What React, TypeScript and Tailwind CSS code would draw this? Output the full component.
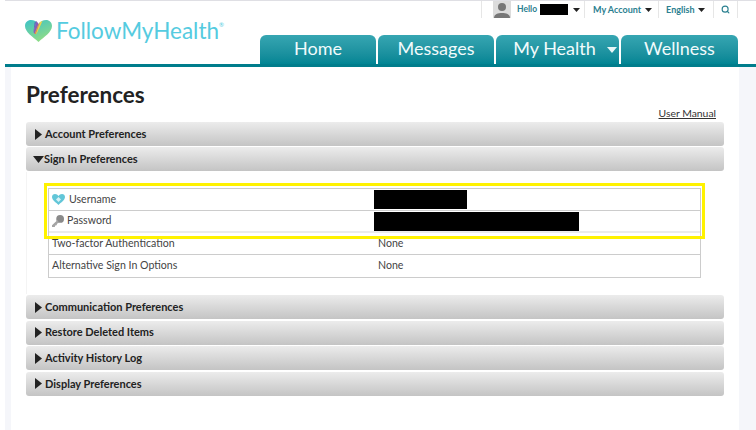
import type { ReactNode } from "react";
import { Search } from "lucide-react";

const font = "font-['Lato','Open_Sans',sans-serif]";

function Caret({ className = "" }: { className?: string }) {
  return (
    <svg width="7" height="4" viewBox="0 0 7 4" className={className}>
      <path d="M0 0h7L3.500 4z" fill="#222" />
    </svg>
  );
}

function HeartLogo() {
  return (
    <svg width="27" height="22" viewBox="0 0 27 22">
      <defs>
        <linearGradient id="hl" x1="0" y1="0" x2="0.5" y2="1">
          <stop offset="0" stopColor="#3cc2c8" />
          <stop offset="1" stopColor="#8fdc86" />
        </linearGradient>
      </defs>
      <path d="M13.500 22C8 17 0 12 0 6c0-3.500 2.600-6 6-6 3 0 5.600 1.600 7.500 4C15.400 1.600 18 0 21 0c3.400 0 6 2.500 6 6 0 6-8 11-13.500 16z" fill="url(#hl)" />
      <path d="M9.500 2.500 11.500 1 8.500 12z" fill="#5a6fc0" />
      <path d="M11.500 1 13.500 4 9.500 14 8.500 12z" fill="#8a5bb8" />
      <path d="M13.500 4 15 2 11 14 9.500 14z" fill="#e98a4a" />
      <path d="M15 2 17.500 1 12 13 11 14z" fill="#f2d24a" />
    </svg>
  );
}

function UserHeart() {
  return (
    <svg width="13" height="11" viewBox="0 0 13 11" className="mr-[1px]">
      <path d="M6.500 11C4 8.500 0 6 0 3c0-1.700 1.300-3 3-3 1.500 0 2.700.8 3.500 2C7.300.8 8.500 0 10 0c1.700 0 3 1.300 3 3 0 3-4 5.500-6.500 8z" fill="#62c6d8" />
      <path d="M6.500 3 9 5.500 6.500 8 4 5.500z" fill="#d8f2f6" />
    </svg>
  );
}

function KeyIcon() {
  return (
    <svg width="12" height="12" viewBox="0 0 13 13">
      <circle cx="8.800" cy="4.200" r="4.200" fill="#8a8a8a" />
      <path d="M6 5.500 0 11v2h3l.5-1.500L5 11l.5-1.500L7.500 8z" fill="#a5a5a5" />
    </svg>
  );
}

function Tab({ label, width, caret }: { label: string; width: string; caret?: boolean }) {
  return (
    <div className={`${width} relative h-[29px] pb-[2px] rounded-t-[6px] bg-gradient-to-b from-[#36a6b2] to-[#008594] flex items-center justify-center text-[18px] text-[#f2fbfc] ${caret ? "pr-[6px]" : ""}`}>
      {label}
      {caret && (
        <svg width="10" height="6" viewBox="0 0 10 6" className="absolute right-[2px] top-[12px]">
          <path d="M0 0h10L5 6z" fill="#e8f6f7" />
        </svg>
      )}
    </div>
  );
}

function SectionBar({ label, open }: { label: string; open?: boolean }) {
  return (
    <div className="h-6 rounded-[3px] bg-gradient-to-b from-[#ececec] to-[#c4c4c4] flex items-center text-[11px] font-bold text-[#222]">
      {open ? (
        <svg width="11" height="7" viewBox="0 0 11 7" className="ml-[7px]">
          <path d="M0 0h11L5.500 7z" fill="#222" />
        </svg>
      ) : (
        <svg width="7" height="11" viewBox="0 0 7 11" className="ml-[9px] mr-[3px]">
          <path d="M0 0l7 5.500L0 11z" fill="#222" />
        </svg>
      )}
      {label}
    </div>
  );
}

function Row({ icon, label, value, mask, border = "border-b border-[#ccc]" }: { icon?: ReactNode; label: string; value?: string; mask?: string; border?: string }) {
  return (
    <div className={`h-[22px] flex items-center ${border}`}>
      <div className="w-[325px] pl-[3px] flex items-center gap-[3px] text-[10.600px] text-[#444]">
        {icon}
        {label}
      </div>
      {mask ? <div className={`${mask} h-[19px] bg-black`} /> : <div className="pl-[4px] text-[10.600px] text-[#444]">{value}</div>}
    </div>
  );
}

export default function App() {
  return (
    <div className={`w-[756px] h-[430px] overflow-hidden bg-white pl-[5px] flex flex-col ${font}`}>
      <div className="h-[1px] bg-[#dfdfe4]" />
      {/* header */}
      <div className="relative h-[63px] shrink-0">
        <div className="absolute left-[476px] top-0 h-[17px] flex items-center text-[9px] font-bold text-[#2b8090]">
          <div className="w-[12px] h-[17px] border-l border-[#e6e6e6]" />
          <svg width="18" height="17" viewBox="0 0 18 17">
            <rect width="18" height="17" fill="#dcdcdc" />
            <circle cx="9" cy="6" r="4" fill="#777" />
            <path d="M1 17c0-4 4-5 8-5s8 1 8 5z" fill="#777" />
          </svg>
          <span className="ml-[6px] w-[20px] text-[8.500px]">Hello</span>
          <div className="ml-[3px] w-[28px] h-[11px] bg-black" />
          <Caret className="ml-[5px]" />
          <div className="ml-[4px] h-[17px] border-l border-[#e6e6e6]" />
          <span className="ml-[8px]">My Account</span>
          <Caret className="ml-[4px]" />
          <div className="ml-[6px] h-[17px] border-l border-[#e6e6e6]" />
          <span className="ml-[7px]">English</span>
          <Caret className="ml-[3px]" />
          <div className="ml-[8px] h-[17px] border-l border-[#e6e6e6]" />
          <Search size={9} strokeWidth={3} className="ml-[7px] text-[#2b8090]" />
          <div className="ml-[7px] h-[17px] border-l border-[#e6e6e6]" />
        </div>
        <div className="absolute left-[20px] top-[19px] flex items-center">
          <HeartLogo />
          <span className="ml-[4px] text-[22.500px] leading-none text-[#55cbe0]">FollowMyHealth</span>
          <span className="self-start text-[6px] text-[#55cbe0]">®</span>
        </div>
        <div className="absolute left-[255px] top-[34px] flex gap-[2px]">
          <Tab label="Home" width="w-[116px]" />
          <Tab label="Messages" width="w-[116px]" />
          <Tab label="My Health" width="w-[123px]" caret />
          <Tab label="Wellness" width="w-[117px]" />
        </div>
      </div>
      <div className="h-[3px] shrink-0 bg-[#007d8c]" />
      {/* page */}
      <div className="flex-1 bg-[#f5f6fa] px-[6px] flex">
        <div className="relative flex-1 mr-[11px] bg-white px-[15px] pt-[15px]">
          <div className="flex items-start justify-between">
            <h1 className="text-[22.500px] leading-[26px] font-bold text-[#222]">Preferences</h1>
            <a className="mt-[25px] mr-[8px] text-[10.400px] leading-[12px] underline text-[#333]">User Manual</a>
          </div>
          <div className="mt-[3px] flex flex-col gap-[1px]">
            <SectionBar label="Account Preferences" />
            <SectionBar label="Sign In Preferences" open />
            <div className="h-[122px] border-l border-[#f4f4f4] pl-[21px] pt-[16px] pr-[23px]">
              <div className="border border-[#ccc]">
                <Row label="Username" mask="w-[93px]" icon={<UserHeart />} />
                <Row label="Password" mask="w-[205px]" icon={<KeyIcon />} border="border-b-2 border-[#ebebeb]" />
                <Row label="Two-factor Authentication" value="None" />
                <Row label="Alternative Sign In Options" value="None" border="" />
              </div>
            </div>
            <div className="flex flex-col gap-[1.670px]">
              <SectionBar label="Communication Preferences" />
              <SectionBar label="Restore Deleted Items" />
              <SectionBar label="Activity History Log" />
              <SectionBar label="Display Preferences" />
            </div>
          </div>
          {/* yellow highlight drawn over the table */}
          <div className="absolute left-[33px] top-[116px] w-[661px] h-[56px] border-[3px] border-[#fff200]" />
        </div>
      </div>
    </div>
  );
}
